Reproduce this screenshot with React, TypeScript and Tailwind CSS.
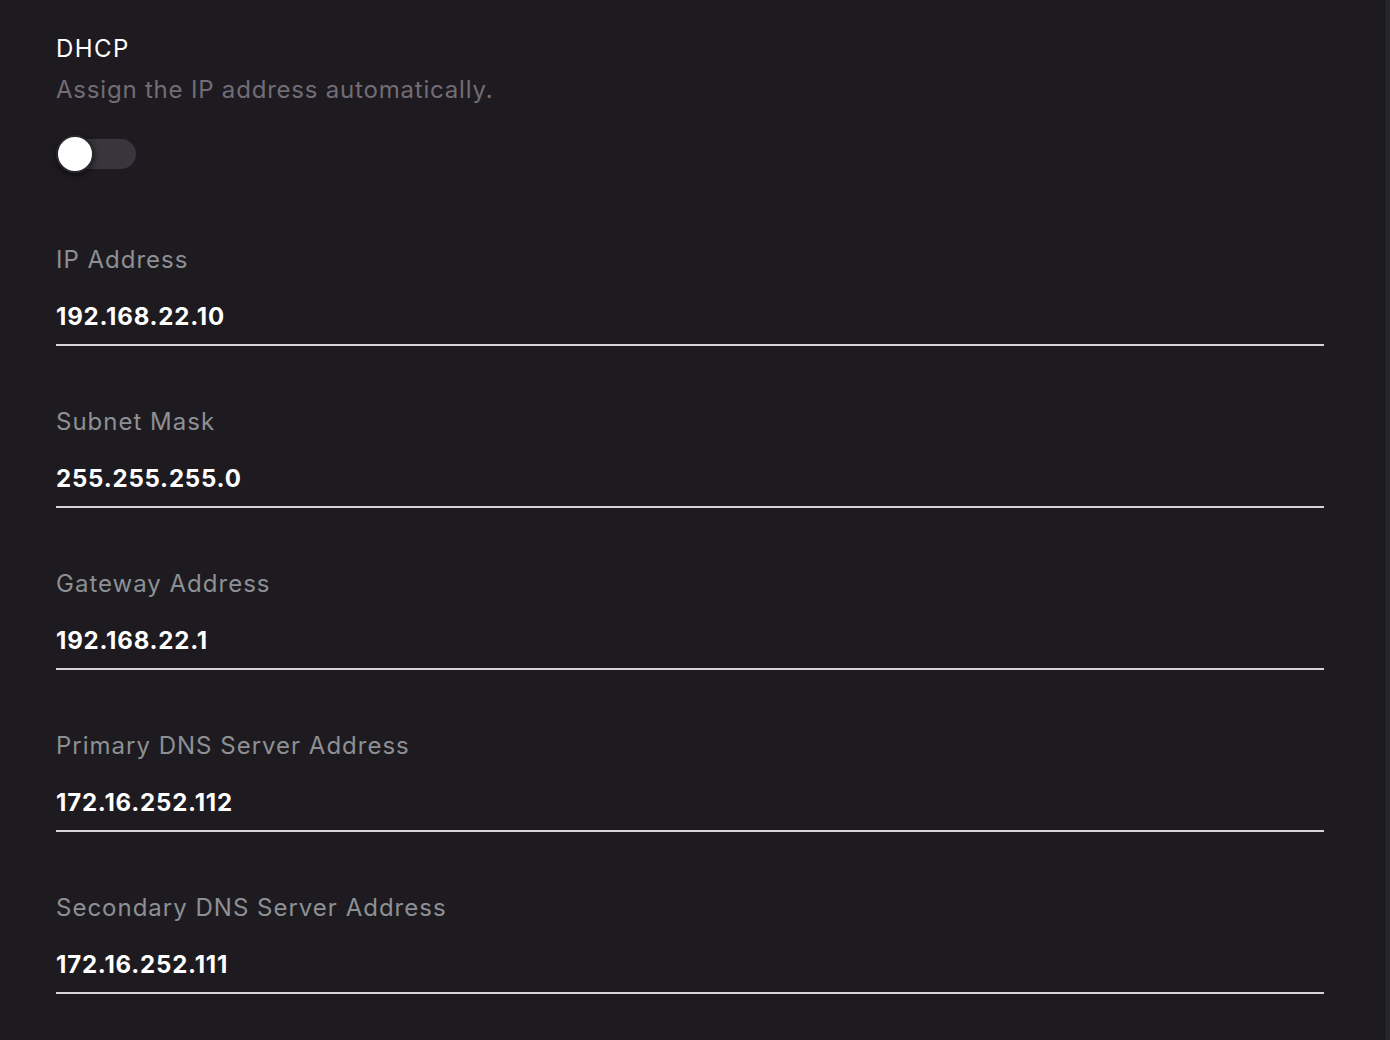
import React, { useState } from 'react';

const fields = [
  { label: 'IP Address', value: '192.168.22.10' },
  { label: 'Subnet Mask', value: '255.255.255.0' },
  { label: 'Gateway Address', value: '192.168.22.1' },
  { label: 'Primary DNS Server Address', value: '172.16.252.112' },
  { label: 'Secondary DNS Server Address', value: '172.16.252.111' },
];

const App: React.FC = () => {
  const [dhcp, setDhcp] = useState(false);

  return (
    <div
      className="flex min-h-screen w-full bg-[#1e1b20]"
      style={{ fontFamily: 'Inter, "Open Sans", sans-serif' }}
    >
      <div className="flex-1 pl-14 pr-[60px] pt-[33px]">
        <div className="text-[24px] leading-8 tracking-[1.4px] text-white">DHCP</div>
        <div className="mt-[9px] text-[24px] leading-8 tracking-[0.8px] text-[#726c76]">
          Assign the IP address automatically.
        </div>
        <button
          type="button"
          onClick={() => setDhcp(!dhcp)}
          className="relative mt-[29px] flex h-[38px] w-[80px] items-center focus:outline-none"
        >
          <span
            className={`block h-[30px] w-[80px] rounded-full ${dhcp ? 'bg-[#4a8cf0]' : 'bg-[#38363c]'}`}
          />
          <span
            className={`absolute top-0 h-[38px] w-[38px] rounded-full border-2 border-[#2a272d] bg-white shadow-[0_2px_6px_rgba(0,0,0,0.6)] ${dhcp ? 'left-[42px]' : 'left-0'}`}
          />
        </button>

        <div className="mt-[71px] flex flex-col gap-[60px]">
          {fields.map((f) => (
            <div key={f.label} className="flex flex-col">
              <div className="text-[24px] leading-8 tracking-[1px] text-[#8c9094]">{f.label}</div>
              <div className="mt-[25px] text-[24px] font-bold leading-8 tracking-[0.8px] text-white">
                {f.value}
              </div>
              <div className="mt-[11px] h-[2px] w-full bg-[#d6d4d8]" />
            </div>
          ))}
        </div>
      </div>
      <div className="w-[6px] shrink-0 border-l border-[#19171b] bg-[#27262a]" />
    </div>
  );
};

export default App;
